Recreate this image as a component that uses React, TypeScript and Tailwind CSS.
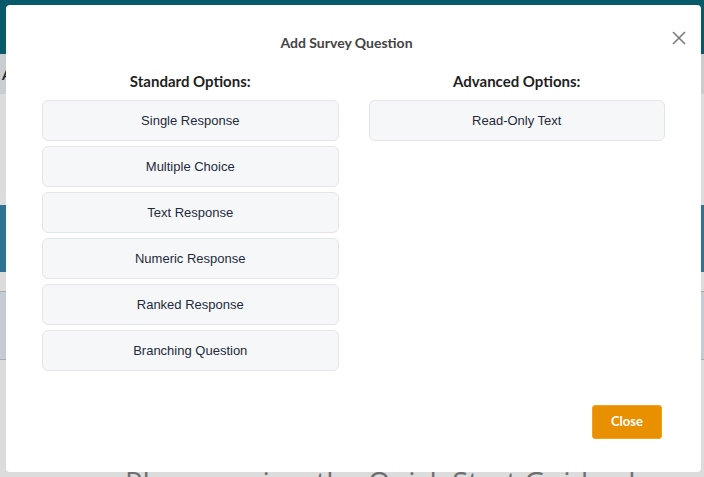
import React from "react";

const standardOptions = [
  "Single Response",
  "Multiple Choice",
  "Text Response",
  "Numeric Response",
  "Ranked Response",
  "Branching Question",
];

const advancedOptions = ["Read-Only Text"];

function OptionButton({ label }: { label: string }) {
  return (
    <button className="h-[41px] w-full rounded-[6px] border border-[#e4e5e7] bg-[#f6f7f9] text-[13px] text-[#1e2b3c] [font-family:'Liberation_Sans',Arial,sans-serif]">
      {label}
    </button>
  );
}

function OptionColumn({ title, options }: { title: string; options: string[] }) {
  return (
    <div className="flex flex-col">
      <h3 className="mb-[9px] text-center text-[15px] font-bold leading-[20px] text-[#1f1f1f]">
        {title}
      </h3>
      <div className="flex flex-col gap-[5px]">
        {options.map((o) => (
          <OptionButton key={o} label={o} />
        ))}
      </div>
    </div>
  );
}

export default function App() {
  return (
    <div className="relative h-[477px] w-[704px] overflow-hidden bg-[#dcdcdc] [font-family:Lato,'Noto_Sans',sans-serif]">
      {/* page behind the overlay */}
      <div className="flex flex-col">
        <div className="h-[54px] bg-[#08596a]" />
        <div className="flex h-[40px] items-center bg-[#c9cdd0] pl-[2px] text-[14px] font-bold text-[#222]">
          A
        </div>
        <div className="h-[111px]" />
        <div className="h-[67px] bg-[#2f7292]" />
        <div className="h-[19px]" />
        <div className="h-[69px] border-y border-[#a9abad] bg-[#c6cad2]" />
        <div className="h-[107px]" />
        <div className="whitespace-nowrap pl-[125px] text-[29px] leading-[30px] text-[#6f6f6f] [font-family:'Open_Sans',sans-serif]">
          Please review the Quick Start Guide above (
        </div>
      </div>

      {/* modal */}
      <div className="absolute left-[6px] top-[5px] flex h-[467px] w-[695px] flex-col rounded-[4px] bg-white px-[36px]">
        <button className="absolute right-[15px] top-[26px] text-[#7a7a7a]">
          <svg width="14" height="14" viewBox="0 0 14 14" fill="none" stroke="currentColor" strokeWidth="1.6">
            <path d="M1 1L13 13M13 1L1 13" />
          </svg>
        </button>
        <h2 className="mt-[29px] pr-[14px] text-center text-[14px] font-bold leading-[18px] text-[#444]">
          Add Survey Question
        </h2>
        <div className="mt-[19px] grid grid-cols-2 gap-[30px]">
          <OptionColumn title="Standard Options:" options={standardOptions} />
          <OptionColumn title="Advanced Options:" options={advancedOptions} />
        </div>
        <div className="mt-auto mb-[33px] mr-[3px] flex justify-end">
          <button className="h-[34px] w-[70px] rounded-[3px] border border-[#f2a21c] bg-[#e99000] text-[13px] font-bold text-white">
            Close
          </button>
        </div>
      </div>
    </div>
  );
}
